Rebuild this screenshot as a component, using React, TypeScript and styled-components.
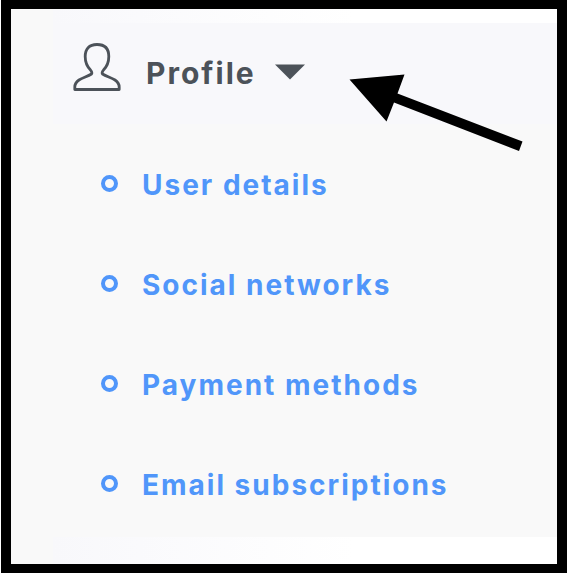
import React from "react";
import styled, { createGlobalStyle } from "styled-components";

const GlobalStyle = createGlobalStyle`
  * { box-sizing: border-box; }
  body { margin: 0; background: #fff; }
`;

const Frame = styled.div`
  position: relative;
  display: flex;
  flex-direction: column;
  min-height: 100vh;
  margin-left: 1px;
  padding-left: 42px;
  border: solid #000;
  border-width: 9px 10px;
  background: #f9f9f9;
  font-family: Inter, "Liberation Sans", sans-serif;
  font-size: 28px;
  font-weight: 700;
  line-height: 40px;
  letter-spacing: 2px;
`;

const Strip = styled.div<{ $grow?: boolean }>`
  height: 14px;
  flex: ${(p) => (p.$grow ? "1 0 14px" : "none")};
  background: linear-gradient(to right, #f8f8fb, #fff 60%);
`;

const ProfileToggle = styled.button`
  display: flex;
  align-items: center;
  width: 100%;
  height: 101px;
  padding: 0 0 2px 20px;
  border: 0;
  background: #f8f8fb;
  color: #4c5259;
  font: inherit;
  font-size: 30px;
  letter-spacing: inherit;
  text-align: left;
  cursor: pointer;
`;

const UserIcon = styled.svg`
  width: 48px;
  height: 48px;
  margin: 0 25px 12px 0;
`;

const Caret = styled.svg`
  width: 30px;
  height: 16px;
  margin: 0 0 2px 19px;
`;

const Menu = styled.ul`
  list-style: none;
  margin: 0;
  padding: 11px 0 2px 48px;
`;

const MenuItem = styled.li`
  height: 100px;
  display: flex;
  align-items: center;
`;

const MenuLink = styled.a`
  display: flex;
  align-items: center;
  gap: 24px;
  color: #5096fa;
  text-decoration: none;
  white-space: nowrap;
`;

const Ring = styled.span`
  width: 17px;
  height: 17px;
  margin-bottom: 4px;
  border: 4px solid currentColor;
  border-radius: 50%;
`;

const Pointer = styled.svg`
  position: absolute;
  top: 64px;
  left: 336px;
  width: 178px;
  height: 80px;
  pointer-events: none;
`;

const links = [
  { label: "User details", href: "#user-details" },
  { label: "Social networks", href: "#social-networks" },
  { label: "Payment methods", href: "#payment-methods" },
  { label: "Email subscriptions", href: "#email-subscriptions" },
];

export default function App() {
  const [open, setOpen] = React.useState(true);
  return (
    <>
      <GlobalStyle />
      <Frame>
        <Strip />
        <ProfileToggle aria-expanded={open} onClick={() => setOpen(!open)}>
          <UserIcon viewBox="0 0 48 48" fill="none" aria-hidden="true">
            <path
              d="M24 1.500C16 1.500 12.200 6 12.200 13.500C12.200 19 14.500 24 17.500 27Q19.500 29.500 18.500 31C14.500 33.500 10 34.500 6 37C2.500 39.500 1.800 41.500 1.800 44V46.500H46.200V44C46.200 41.500 45.500 39.500 42 37C38 34.500 33.500 33.500 29.500 31Q28.500 29.500 30.500 27C33.500 24 35.800 19 35.800 13.500C35.800 6 32 1.500 24 1.500Z"
              stroke="#4c5259"
              strokeWidth="2.800"
              strokeLinejoin="round"
            />
          </UserIcon>
          <span>Profile</span>
          <Caret viewBox="0 0 30 16" aria-hidden="true">
            <path d="M0 0.500H30L15 15.500Z" fill="#4c5259" />
          </Caret>
        </ProfileToggle>
        {open && (
          <Menu>
            {links.map((l) => (
              <MenuItem key={l.href}>
                <MenuLink href={l.href}>
                  <Ring />
                  {l.label}
                </MenuLink>
              </MenuItem>
            ))}
          </Menu>
        )}
        <Strip $grow />
        <Pointer viewBox="347 73 178 80" aria-hidden="true">
          <path d="M349.500 79.500L404.500 74.500L397.500 93.500L522.500 141.500L519 151L394 102.500L386.500 121.500Z" />
        </Pointer>
      </Frame>
    </>
  );
}
